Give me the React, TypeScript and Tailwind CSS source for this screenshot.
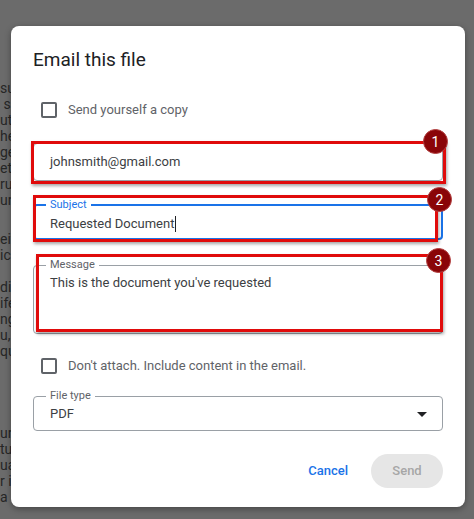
import React from "react"

const font = { fontFamily: "Roboto, 'Noto Sans', Arial, sans-serif" }

const bgGroups: { top: string; lines: string[] }[] = [
  { top: "mt-[80px]", lines: ["su", " si", "ut", "he", "ge", "et", "ru", "un"] },
  { top: "mt-[23px]", lines: ["eif", "ic", "   i", "dig", "ife", "ng", "u,", "qu"] },
  { top: "mt-[50px]", lines: ["   s", "ur", "tu", "ua", "r i", "a "] },
]

function Checkbox({ label }: { label: string }) {
  return (
    <div className="flex items-center h-[16px] pl-[8px]">
      <span className="w-[16px] h-[16px] border-2 border-[#5f6368] rounded-[2px] shrink-0" />
      <span className="ml-[11px] text-[13px] leading-[16px] text-[#5f6368]">{label}</span>
    </div>
  )
}

function Badge({ n, className }: { n: number; className: string }) {
  return (
    <div
      className={`absolute w-[25px] h-[25px] rounded-full bg-[#8a0508] border border-[#b34040] flex items-center justify-center text-white text-[14px] leading-none ${className}`}
    >
      {n}
    </div>
  )
}

export default function App() {
  return (
    <div className="relative w-[474px] h-[519px] bg-[#6b6b6b] overflow-hidden" style={font}>
      {/* page behind the overlay */}
      <div className="w-[11px] overflow-hidden flex flex-col text-[14px] leading-[16px] text-[#262626] whitespace-pre">
        {bgGroups.map((g, i) => (
          <div key={i} className={g.top}>
            {g.lines.map((l, j) => (
              <div key={j}>{l}</div>
            ))}
          </div>
        ))}
      </div>

      {/* dialog */}
      <div className="absolute left-[11px] top-[26px] w-[454px] h-[481px] bg-white rounded-[8px] shadow-[0_2px_6px_rgba(0,0,0,0.35)] px-[22px]">
        <h2 className="pt-[22px] text-[19px] leading-[24px] text-[#202124]">Email this file</h2>

        <div className="mt-[30px]">
          <Checkbox label="Send yourself a copy" />
        </div>

        {/* To field */}
        <div className="mt-[25px] h-[38px] border border-[#9aa0a6] rounded-[4px] flex items-center px-[16px] text-[13px] text-[#3c4043]">
          johnsmith@gmail.com
        </div>

        {/* Subject */}
        <fieldset className="mt-[18px] border-2 border-[#1a73e8] rounded-[4px] px-[11px] pb-0">
          <legend className="px-[4px] text-[11px] leading-[12px] text-[#1a73e8]">Subject</legend>
          <div className="flex items-center h-[27px] pl-[4px] pb-[1px] text-[13px] leading-[20px] text-[#3c4043]">
            Requested Document
            <span className="w-px h-[16px] bg-[#202124] ml-[1px]" />
          </div>
        </fieldset>

        {/* Message */}
        <fieldset className="mt-[19px] border border-[#9aa0a6] rounded-[4px] px-[12px] h-[75px]">
          <legend className="px-[4px] text-[11px] leading-[12px] text-[#5f6368]">Message</legend>
          <div className="pl-[4px] pt-[2px] text-[13px] leading-[20px] text-[#3c4043]">
            This is the document you've requested
          </div>
        </fieldset>

        <div className="mt-[24px]">
          <Checkbox label="Don't attach. Include content in the email." />
        </div>

        {/* File type */}
        <fieldset className="mt-[16px] border border-[#9aa0a6] rounded-[4px] pl-[12px] pr-[15px]">
          <legend className="px-[4px] text-[11px] leading-[12px] text-[#5f6368]">File type</legend>
          <div className="flex items-center justify-between h-[28px] pl-[4px] pb-[6px] pt-[2px] text-[13px] leading-[20px] text-[#3c4043]">
            <span>PDF</span>
            <svg width="10" height="5" viewBox="0 0 10 5">
              <path d="M0 0 L10 0 L5 5 Z" fill="#202124" />
            </svg>
          </div>
        </fieldset>

        <div className="mt-[23px] flex justify-end items-center gap-[11px]">
          <button className="h-[34px] px-[12px] rounded-full text-[13px] font-medium text-[#1a73e8]">Cancel</button>
          <button className="h-[34px] w-[72px] rounded-full bg-[#e6e6e6] text-[13px] font-medium text-[#a6a6a6]">Send</button>
        </div>

        {/* annotations */}
        <div className="absolute left-[20px] top-[115px] w-[415px] h-[43px] border-[3px] border-[#e00b0b] shadow-[1px_2px_3px_rgba(0,0,0,0.35)]" />
        <div className="absolute left-[22px] top-[169px] w-[405px] h-[47px] border-[3px] border-[#e00b0b] shadow-[1px_2px_3px_rgba(0,0,0,0.35)]" />
        <div className="absolute left-[25px] top-[228px] w-[407px] h-[78px] border-[3px] border-[#e00b0b] shadow-[1px_2px_3px_rgba(0,0,0,0.35)]" />
        <Badge n={1} className="left-[412px] top-[103px]" />
        <Badge n={2} className="left-[416px] top-[161px]" />
        <Badge n={3} className="left-[415px] top-[222px]" />
      </div>
    </div>
  )
}
